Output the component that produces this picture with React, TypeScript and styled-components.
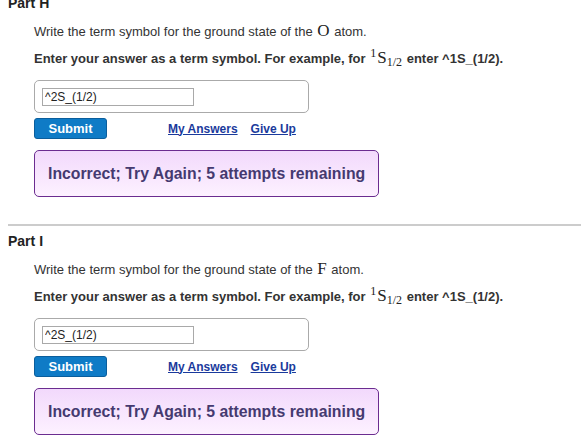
import React from "react";
import styled, { createGlobalStyle } from "styled-components";

const Global = createGlobalStyle`
  html, body { margin: 0; padding: 0; background: #ffffff; overflow: hidden; }
  body { font-family: "Liberation Sans", Arial, sans-serif; color: #333333; }
`;

const Page = styled.div`
  margin-top: -5px;
  padding-left: 8px;
`;

const Section = styled.section``;

const PartTitle = styled.h2`
  margin: 0;
  font-size: 14px;
  line-height: 16px;
  font-weight: bold;
  color: #222222;
`;

const PartBody = styled.div`
  padding-left: 26px;
`;

const Prompt = styled.p`
  margin: 13px 0 0;
  font-size: 13px;
  line-height: 16px;
  color: #333333;
`;

const Instruction = styled.p`
  margin: 11px 0 0;
  font-size: 13px;
  line-height: 16px;
  font-weight: bold;
  color: #333333;
`;

const Math = styled.span`
  font-family: "Liberation Serif", "Times New Roman", serif;
  font-weight: normal;
  font-size: 17px;
  line-height: 0;
  color: #222222;
  padding: 0 1px;
`;

const Sup = styled.sup`
  font-size: 12px;
  line-height: 0;
  vertical-align: 6px;
  margin-right: 1px;
`;

const Sub = styled.sub`
  font-size: 12px;
  line-height: 0;
  vertical-align: -3px;
`;

const AnswerBox = styled.div`
  margin-top: 13px;
  box-sizing: border-box;
  width: 275px;
  height: 33px;
  padding: 7px;
  border: 1px solid #aaaaaa;
  border-radius: 5px;
`;

const AnswerInput = styled.input`
  box-sizing: border-box;
  display: block;
  width: 152px;
  height: 18px;
  margin: 0;
  padding: 0 2px;
  border: 1px solid #a9a9a9;
  font-family: "Liberation Sans", Arial, sans-serif;
  font-size: 12px;
  color: #222222;
  background: #ffffff;
  outline: none;
`;

const Actions = styled.div`
  margin-top: 5px;
  display: flex;
  align-items: center;
  height: 21px;
`;

const SubmitButton = styled.button`
  box-sizing: border-box;
  width: 73px;
  height: 21px;
  margin: 0 61px 0 0;
  padding: 0;
  border: 1px solid #0b5e9c;
  border-radius: 3px;
  background: #0f7bc6;
  color: #ffffff;
  font-family: "Liberation Sans", Arial, sans-serif;
  font-size: 13px;
  font-weight: bold;
  line-height: 19px;
  cursor: pointer;
`;

const LinkRow = styled.div`
  display: flex;
  gap: 13px;
`;

const ActionLink = styled.a`
  font-size: 12px;
  font-weight: bold;
  color: #1a3a9c;
  text-decoration: underline;
  cursor: pointer;
`;

const Feedback = styled.div`
  margin-top: 11px;
  box-sizing: border-box;
  width: 345px;
  height: 47px;
  padding: 0 13px;
  display: flex;
  align-items: center;
  white-space: nowrap;
  border: 1px solid #6b2c90;
  border-radius: 5px;
  background: linear-gradient(to bottom, #f2d9fc, #fdf1ff);
  color: #453a70;
  font-size: 15.8px;
  font-weight: bold;
`;

const Divider = styled.hr`
  margin: 27px 0 7px;
  border: none;
  height: 2px;
  background: #cccccc;
`;

type PartProps = { label: string; atom: string };

function Part({ label, atom }: PartProps) {
  return (
    <Section>
      <PartTitle>Part {label}</PartTitle>
      <PartBody>
        <Prompt>
          Write the term symbol for the ground state of the <Math>{atom}</Math> atom.
        </Prompt>
        <Instruction>
          Enter your answer as a term symbol. For example, for{" "}
          <Math>
            <Sup>1</Sup>S<Sub>1/2</Sub>
          </Math>{" "}
          enter ^1S_(1/2).
        </Instruction>
        <AnswerBox>
          <AnswerInput defaultValue="^2S_(1/2)" />
        </AnswerBox>
        <Actions>
          <SubmitButton>Submit</SubmitButton>
          <LinkRow>
            <ActionLink>My Answers</ActionLink>
            <ActionLink>Give Up</ActionLink>
          </LinkRow>
        </Actions>
        <Feedback>Incorrect; Try Again; 5 attempts remaining</Feedback>
      </PartBody>
    </Section>
  );
}

export default function App() {
  return (
    <>
      <Global />
      <Page>
        <Part label="H" atom="O" />
        <Divider />
        <Part label="I" atom="F" />
      </Page>
    </>
  );
}
